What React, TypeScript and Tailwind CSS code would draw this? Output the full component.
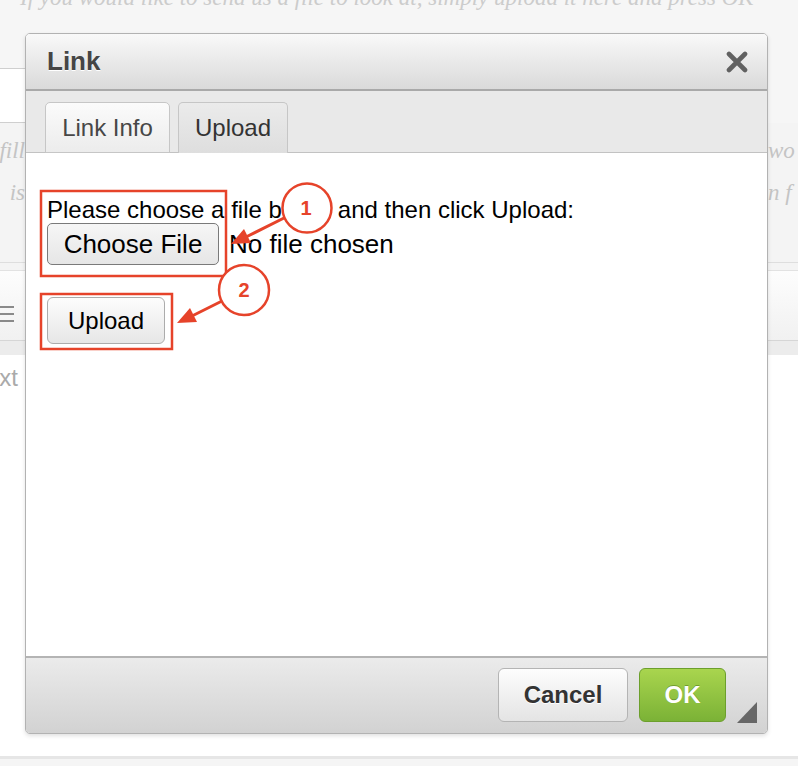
import React from 'react';

const sans = { fontFamily: '"Liberation Sans", Arial, Helvetica, sans-serif' };

// faded page text peeking out on both sides of the dialog
const PageLine: React.FC<{ left: string; right: string }> = ({ left, right }) => (
  <div className="flex h-[42px] items-center whitespace-nowrap font-['Liberation_Serif',serif] text-[23px] italic text-[#c4c4c4]">
    <div className="flex w-[25px] justify-end overflow-hidden">{left}</div>
    <div className="flex-1" />
    <div className="w-[31px] overflow-hidden pl-[1px]">{right}</div>
  </div>
);

const Annotations: React.FC = () => (
  <svg
    className="pointer-events-none absolute left-0 top-0"
    width="798"
    height="766"
    viewBox="0 0 798 766"
  >
    <g fill="none" stroke="#e6432a" strokeWidth="2.5">
      <rect x="41" y="191" width="185" height="85" />
      <rect x="41" y="294" width="131" height="55" />
    </g>
    <g stroke="#e6432a" strokeWidth="3" strokeLinecap="round">
      <line x1="284" y1="218" x2="246" y2="237" />
      <line x1="222" y1="301" x2="192" y2="316" />
    </g>
    <g fill="#e6432a">
      <polygon points="231,244 251,243 244,229" />
      <polygon points="177,323 197,322 190,308" />
    </g>
    <g fill="#ffffff" stroke="#e6432a" strokeWidth="2.5">
      <circle cx="307" cy="208" r="24.5" />
      <circle cx="244" cy="290" r="25" />
    </g>
    <g
      fill="#e6432a"
      fontFamily='"Liberation Sans", Arial, sans-serif'
      fontWeight="bold"
      fontSize="20"
      textAnchor="middle"
    >
      <text x="306" y="215">1</text>
      <text x="244" y="297">2</text>
    </g>
  </svg>
);

export default function App() {
  return (
    <div className="relative h-[766px] w-[798px] overflow-hidden bg-[#f6f6f6]" style={sans}>
      {/* page behind the dialog */}
      <div className="flex h-full flex-col">
        <div className="h-[68px] overflow-hidden">
          <div className="-mt-[19px] whitespace-nowrap pl-[20px] font-['Liberation_Serif',serif] text-[23px] italic text-[#cccccc]">
            If you would like to send us a file to look at, simply upload it here and press OK
          </div>
        </div>
        <div className="h-[55px] w-[420px] border-y border-[#cfcfcf] bg-white" />
        <div className="flex h-[139px] flex-col bg-[#f4f4f4] pt-[7px]">
          <PageLine left="fill" right="wo" />
          <PageLine left="is" right="n f" />
        </div>
        <div className="h-[8px] border-t border-[#dedede] bg-[#f4f4f4]" />
        <div className="flex h-[70px] items-center border-t border-[#e2e2e2] bg-gradient-to-b from-[#fdfdfd] to-[#f1f1f1] pt-[16px]">
          <div className="flex w-[14px] flex-col gap-[5px]">
            <div className="h-[2px] bg-[#8a8a8a]" />
            <div className="h-[2px] bg-[#8a8a8a]" />
            <div className="h-[2px] bg-[#8a8a8a]" />
          </div>
        </div>
        <div className="h-[15px] border-t border-[#d6d6d6] bg-[#ececec]" />
        <div className="flex-1 bg-white pt-[5px]">
          <div className="-ml-[26px] text-[24px] text-[#aaaaaa]">Text</div>
        </div>
        <div className="h-[10px] border-t-[3px] border-[#e6e6e6] bg-[#f5f5f5]" />
      </div>

      {/* Link dialog */}
      <div className="absolute left-[25px] top-[33px] flex h-[701px] w-[743px] flex-col overflow-hidden rounded-[5px] border border-[#b2b2b2] bg-white shadow-[0_2px_4px_rgba(0,0,0,0.12)]">
        <div className="flex h-[57px] items-center justify-between border-b-2 border-[#a9a9a9] bg-gradient-to-b from-[#f9f9f9] to-[#dadada] pl-[21px] pr-[19px]">
          <span className="text-[26px] font-bold text-[#454545] [text-shadow:0_1px_0_#fff]">Link</span>
          <svg width="22" height="22" viewBox="0 0 22 22">
            <path d="M3 3 L19 19 M19 3 L3 19" stroke="#616161" strokeWidth="4.6" strokeLinecap="round" />
          </svg>
        </div>

        <div className="flex h-[62px] items-end gap-[8px] border-b border-[#c2c2c2] bg-[#e9e9e9] pl-[19px]">
          <div className="-mb-px flex h-[51px] w-[125px] items-center justify-center rounded-t-[5px] border border-[#c6c6c6] bg-gradient-to-b from-[#fbfbfb] to-[#ececec] text-[24px] text-[#474747]">
            Link Info
          </div>
          <div className="-mb-px flex h-[51px] w-[110px] items-center justify-center rounded-t-[5px] border border-b-0 border-[#c6c6c6] bg-gradient-to-b from-[#ebebeb] to-[#dedede] text-[24px] text-[#333333]">
            Upload
          </div>
        </div>

        <div className="flex-1 bg-white pl-[21px] pt-[43px] text-black">
          <div className="whitespace-nowrap text-[24px] leading-[27px]">
            Please choose a file below and then click Upload:
          </div>
          <div className="flex items-center">
            <div className="flex h-[42px] w-[172px] items-center justify-center rounded-[5px] border border-[#7a7a7a] bg-gradient-to-b from-[#f6f6f6] to-[#e6e6e6] text-[26px]">
              Choose File
            </div>
            <span className="ml-[10px] text-[26px]">No file chosen</span>
          </div>
          <div className="mt-[32px] flex h-[47px] w-[118px] items-center justify-center rounded-[6px] border border-[#acacac] bg-gradient-to-b from-[#fdfdfd] to-[#e6e6e6] text-[24px]">
            Upload
          </div>
        </div>

        <div className="relative flex h-[77px] justify-end gap-[11px] border-t-2 border-[#b4b4b4] bg-gradient-to-b from-[#ebebeb] to-[#d2d2d2] pr-[41px] pt-[10px]">
          <div className="flex h-[54px] w-[130px] items-center justify-center rounded-[6px] border border-[#b4b4b4] bg-gradient-to-b from-[#fdfdfd] to-[#e4e4e4] text-[24px] font-bold text-[#333333] [text-shadow:0_1px_0_#fff]">
            Cancel
          </div>
          <div className="flex h-[54px] w-[87px] items-center justify-center rounded-[6px] border border-[#6c9f2c] bg-gradient-to-b from-[#a9d54e] to-[#7bb236] text-[24px] font-bold text-white [text-shadow:0_-1px_0_rgba(60,100,20,0.45)]">
            OK
          </div>
          <svg className="absolute bottom-[10px] right-[10px]" width="20" height="21" viewBox="0 0 20 21">
            <polygon points="20,0 20,21 0,21" fill="#676767" />
          </svg>
        </div>
      </div>

      <Annotations />
    </div>
  );
}
